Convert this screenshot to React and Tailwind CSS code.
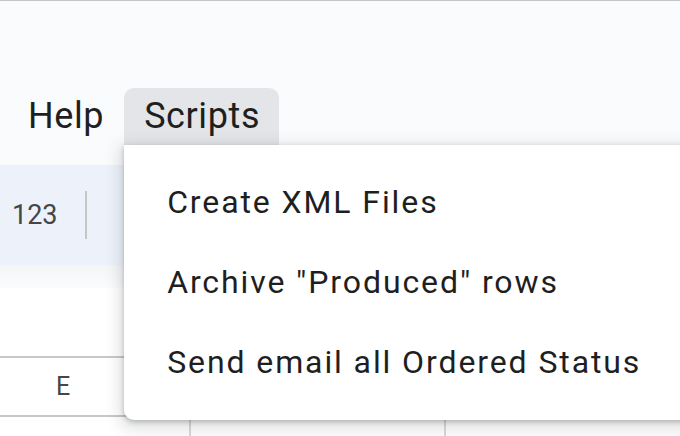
import React from 'react';

const items = ['Create XML Files', 'Archive "Produced" rows', 'Send email all Ordered Status'];

export default function App() {
  return (
    <div
      className="w-[680px] h-[436px] overflow-hidden bg-[#f9fbfd] border-t border-[#c4c7c5] flex flex-col"
      style={{ fontFamily: 'Roboto, "Liberation Sans", sans-serif' }}
    >
      {/* title area */}
      <div className="h-[87px] shrink-0"></div>

      {/* menu bar */}
      <div className="h-[57px] shrink-0 flex items-stretch pl-[8px] text-[36px] tracking-[0.6px] text-[#1f1f1f] relative z-10">
        <div className="px-[20px] flex items-center pb-[2px]">Help</div>
        <div className="relative pl-[20px] pr-[19px] flex items-center pb-[2px] bg-[#e3e5e8] rounded-t-[10px]">
          Scripts
          {/* dropdown */}
          <div className="absolute left-0 top-[57px] w-[620px] bg-white rounded-bl-[10px] pt-[17px] pb-[18px] tracking-[1.9px] shadow-[0_5px_15px_5px_rgba(60,64,67,0.15),0_2px_5px_rgba(60,64,67,0.3)]">
            {items.map((t) => (
              <div key={t} className="h-[80px] leading-[80px] pl-[43px] text-[32px] text-[#1f1f1f] whitespace-nowrap">
                {t}
              </div>
            ))}
          </div>
        </div>
      </div>

      <div className="h-[20px] shrink-0"></div>

      {/* toolbar */}
      <div className="h-[100px] shrink-0 bg-[#edf2fa] flex items-center">
        <span className="ml-[12px] text-[27px] text-[#444746]">123</span>
        <div className="ml-[27px] w-[2px] h-[48px] bg-[#c4c7c5]"></div>
      </div>

      <div className="h-[23px] shrink-0 bg-gradient-to-b from-[#f3f5f7] to-[#fbfcfd]"></div>

      {/* formula bar */}
      <div className="h-[68px] shrink-0 bg-white"></div>

      {/* column header */}
      <div className="h-[61px] shrink-0 bg-white border-y-2 border-[#c7c7c7] flex">
        <div className="w-[126px] flex items-center justify-center text-[25px] text-[#444746]">E</div>
      </div>

      {/* cells */}
      <div className="flex-1 bg-white flex">
        <div className="w-[191px] border-r-2 border-[#d9d9d9]"></div>
        <div className="w-[255px] border-r-2 border-[#d9d9d9]"></div>
      </div>
    </div>
  );
}
